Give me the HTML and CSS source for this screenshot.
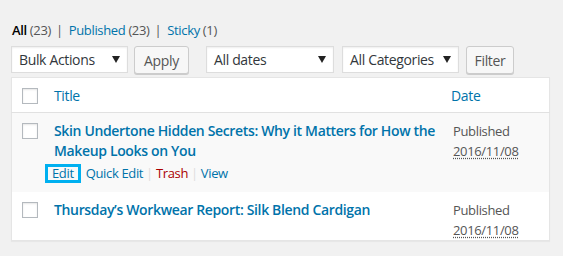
FILE: index.html
```html
<!DOCTYPE html>
<html>
<head>
<meta charset="utf-8">
<link rel="stylesheet" href="styles.css">
</head>
<body>
<div class="wrap">
  <ul class="subsubsub">
    <li><a class="current">All <span class="count">(23)</span></a><span class="sep">|</span></li>
    <li><a>Published <span class="count">(23)</span></a><span class="sep">|</span></li>
    <li><a>Sticky <span class="count">(1)</span></a></li>
  </ul>
  <div class="tablenav">
    <div class="select w-bulk"><span>Bulk Actions</span><i class="arrow"></i></div>
    <button class="button apply">Apply</button>
    <div class="select w-dates"><span>All dates</span><i class="arrow"></i></div>
    <div class="select w-cats"><span>All Categories</span><i class="arrow"></i></div>
    <button class="button filter">Filter</button>
  </div>
  <table class="posts">
    <thead>
      <tr>
        <td class="cb"><span class="checkbox"></span></td>
        <th class="col-title"><a>Title</a></th>
        <th class="col-date"><a>Date</a></th>
      </tr>
    </thead>
    <tbody>
      <tr class="alt">
        <td class="cb"><span class="checkbox"></span></td>
        <td class="col-title">
          <a class="row-title">Skin Undertone Hidden Secrets: Why it Matters for How the Makeup Looks on You</a>
          <div class="row-actions"><a class="edit">Edit</a><a class="qe">Quick Edit</a><span class="sep">|</span><a class="trash">Trash</a><span class="sep">|</span><a>View</a></div>
        </td>
        <td class="col-date">Published<br><abbr>2016/11/08</abbr></td>
      </tr>
      <tr>
        <td class="cb"><span class="checkbox"></span></td>
        <td class="col-title"><a class="row-title">Thursday’s Workwear Report: Silk Blend Cardigan</a></td>
        <td class="col-date">Published<br><abbr>2016/11/08</abbr></td>
      </tr>
    </tbody>
  </table>
</div>
</body>
</html>
```
FILE: styles.css
```css
html, body { margin: 0; padding: 0; }
body {
  background: #f1f1f1;
  font-family: "Open Sans", "Noto Sans", sans-serif;
  font-size: 13px;
  letter-spacing: -0.35px;
  color: #444;
  width: 563px;
  height: 256px;
  overflow: hidden;
}
.wrap { padding: 0 13px 0 11px; }
a { color: #0073aa; text-decoration: none; }
.subsubsub {
  list-style: none;
  margin: 0;
  padding: 21px 0 0 1px;
  display: flex;
  height: 19px;
  line-height: 19px;
}
.subsubsub .current { color: #000; font-weight: 600; }
.subsubsub .count { color: #555; font-weight: 400; }
.subsubsub .sep { color: #555; margin: 0 6px 0 5px; }
.tablenav {
  display: flex;
  margin-top: 6px;
  height: 28px;
}
.select {
  box-sizing: border-box;
  height: 27px;
  border: 1px solid #ddd;
  background: #fff;
  box-shadow: inset 0 1px 2px rgba(0,0,0,.07);
  display: flex;
  align-items: center;
  justify-content: space-between;
  padding: 0 7px 0 7px;
  color: #32373c;
  font-size: 14px;
}
.arrow {
  width: 0; height: 0;
  border-left: 4px solid transparent;
  border-right: 4px solid transparent;
  border-top: 7px solid #222;
}
.w-bulk { width: 117px; margin-right: 6px; }
.w-dates { width: 128px; margin-left: 17px; margin-right: 8px; }
.w-cats { width: 117px; margin-right: 7px; }
.button {
  box-sizing: border-box;
  height: 28px;
  border: 1px solid #ccc;
  border-radius: 3px;
  background: #f7f7f7;
  box-shadow: 0 1px 0 #ccc;
  color: #555;
  font-family: inherit;
  letter-spacing: inherit;
  font-size: 14px;
  padding: 0;
}
.apply { width: 55px; }
.filter { width: 48px; }
.posts {
  margin-top: 3px;
  width: 539px;
  border-collapse: collapse;
  background: #fff;
  border: 1px solid #e5e5e5;
  box-shadow: 0 1px 1px rgba(0,0,0,.04);
}
.posts th, .posts td { padding: 0; text-align: left; vertical-align: top; }
.posts thead th, .posts thead td {
  border-bottom: 1px solid #e1e1e1;
  height: 35px;
  box-sizing: border-box;
  vertical-align: middle;
  font-weight: 400;
  font-size: 14px;
}
.posts .cb { width: 32px; padding-left: 10px; }
.checkbox {
  display: block;
  width: 14px; height: 14px;
  border: 1px solid #b4b9be;
  background: #fff;
  box-shadow: inset 0 1px 2px rgba(0,0,0,.1);
}
.posts thead .checkbox { margin-top: 2px; }
.posts tbody .cb { padding-top: 10px; }
.col-date { width: 96px; }
tr.alt { background: #f9f9f9; }
.posts tbody .col-title { padding: 8px 10px 9px 0; }
.row-title { font-size: 14px; font-weight: 600; line-height: 20px; display: block; }
.row-actions { margin-top: 2px; line-height: 20px; font-size: 13px; color: #ddd; display: flex; align-items: center; }
.row-actions .edit {
  display: inline-block;
  border: 3px solid #00b0f0;
  padding: 0 4px;
  line-height: 13px;
  margin-left: -9px;
  margin-right: 5px;
}
.row-actions .sep { color: #ddd; margin: 0 3px; }
.row-actions .trash { color: #a00; }
.posts tbody .col-date { padding: 8px 0 0 2px; color: #555; line-height: 20px; }
abbr { text-decoration: underline dotted; text-underline-offset: 2px; }
```
